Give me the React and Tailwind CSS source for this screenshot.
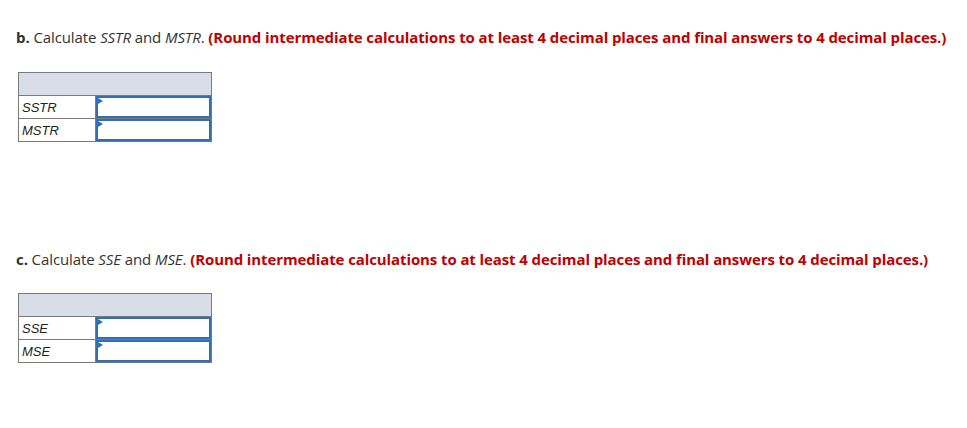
import React from "react";

function AnswerTable({ rows }) {
  return (
    <table className="border-collapse border border-[#7a7a7a] w-[194px] text-[13px] text-[#222]" style={{ fontFamily: "'Liberation Sans', Arial, sans-serif" }}>
      <tbody>
        <tr>
          <td colSpan={2} className="h-[23px] bg-[#d9dde8] border border-[#7a7a7a]"></td>
        </tr>
        {rows.map((r) => (
          <tr key={r}>
            <td className="h-[23px] w-[77px] border border-[#7a7a7a] pl-[3px] italic leading-none p-0">{r}</td>
            <td className="h-[23px] border border-[#7a7a7a] p-0">
              <div className="relative h-[22px] border-2 border-[#2f6fb7] bg-white">
                <span className="absolute left-0 top-0 w-0 h-0 border-y-[3px] border-y-transparent border-l-[5px] border-l-[#2f6fb7]"></span>
              </div>
            </td>
          </tr>
        ))}
      </tbody>
    </table>
  );
}

function Question({ letter, a, b }) {
  return (
    <p className="text-[15px] text-[#333] leading-5 tracking-[-0.1px]">
      <span className="font-bold">{letter}.</span> Calculate <i>{a}</i> and <i>{b}</i>.{" "}
      <span className="font-bold text-[#c00000]">
        (Round intermediate calculations to at least 4 decimal places and final answers to 4 decimal places.)
      </span>
    </p>
  );
}

export default function App() {
  return (
    <div className="w-[967px] h-[428px] bg-white pl-[16px] pt-[27px]" style={{ fontFamily: "'Open Sans', 'Liberation Sans', sans-serif" }}>
      <Question letter="b" a="SSTR" b="MSTR" />
      <div className="mt-[25px] ml-[2px]">
        <AnswerTable rows={["SSTR", "MSTR"]} />
      </div>
      <div className="mt-[107px]">
        <Question letter="c" a="SSE" b="MSE" />
      </div>
      <div className="mt-[24px] ml-[2px]">
        <AnswerTable rows={["SSE", "MSE"]} />
      </div>
    </div>
  );
}
